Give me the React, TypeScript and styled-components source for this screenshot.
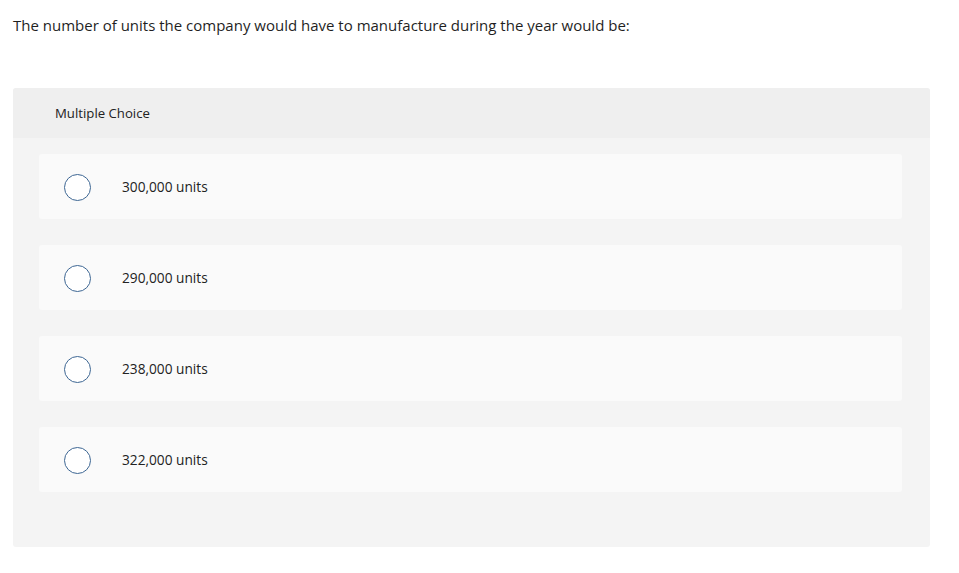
import React from 'react';
import styled, { createGlobalStyle } from 'styled-components';

const GlobalStyle = createGlobalStyle`
  body {
    margin: 0;
    background: #ffffff;
    font-family: "Open Sans", "Liberation Sans", sans-serif;
    color: #1f1f1f;
  }
`;

const choices = ['300,000 units', '290,000 units', '238,000 units', '322,000 units'];

export default function App() {
  return (
    <Page>
      <GlobalStyle />
      <Question>The number of units the company would have to manufacture during the year would be:</Question>
      <Panel>
        <PanelHeader>Multiple Choice</PanelHeader>
        <ChoiceList>
          {choices.map((c) => (
            <Choice key={c}>
              <Radio />
              <ChoiceLabel>{c}</ChoiceLabel>
            </Choice>
          ))}
        </ChoiceList>
      </Panel>
    </Page>
  );
}

const Page = styled.main`
  padding: 15px 29px 0 13px;
`;

const Question = styled.p`
  margin: 0;
  font-size: 15px;
  line-height: 20px;
  color: #1f1f1f;
`;

const Panel = styled.section`
  margin-top: 53px;
  background: #f4f4f4;
  border-radius: 3px;
  overflow: hidden;
`;

const PanelHeader = styled.div`
  height: 50px;
  display: flex;
  align-items: center;
  padding-left: 42px;
  background: #efefef;
  font-size: 13.2px;
  color: #222;
`;

const ChoiceList = styled.div`
  display: flex;
  flex-direction: column;
  gap: 26px;
  padding: 16px 28px 55px 26px;
`;

const Choice = styled.label`
  height: 65px;
  display: flex;
  align-items: center;
  padding-left: 25px;
  background: #fafafa;
  border-radius: 3px;
`;

const Radio = styled.span`
  width: 25px;
  height: 25px;
  margin-top: 1px;
  border: 1.5px solid #3d6693;
  border-radius: 50%;
  background: #fff;
  flex-shrink: 0;
`;

const ChoiceLabel = styled.span`
  margin-left: 31px;
  font-size: 13.7px;
  color: #222;
`;
